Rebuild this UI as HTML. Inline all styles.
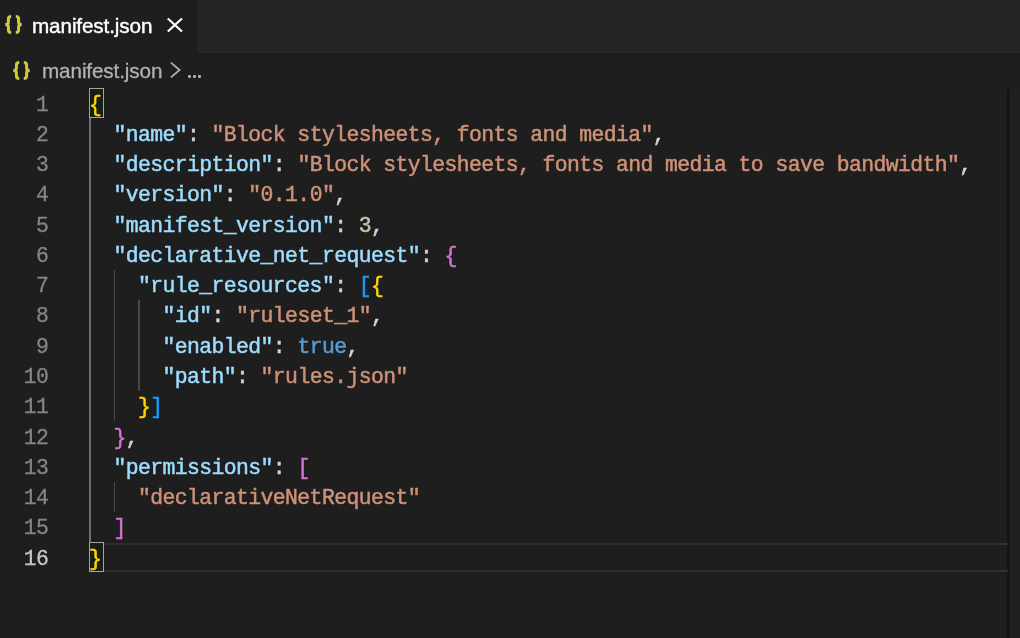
<!DOCTYPE html>
<html><head><meta charset="utf-8">
<style>
*{margin:0;padding:0;box-sizing:border-box}
html,body{width:1020px;height:638px;overflow:hidden;background:#1e1e1e}
body{position:relative;filter:blur(0.35px);font-family:"Liberation Sans",sans-serif}
.a{position:absolute}
#tabs{left:0;top:0;width:1020px;height:53px;background:#252526}
#tab{left:0;top:0;width:197px;height:53px;background:#1e1e1e}
#tabname{left:32px;top:13.5px;font-size:20.7px;letter-spacing:-0.12px;color:#ffffff;white-space:nowrap;-webkit-text-stroke:0.4px currentColor}
#crumb{left:42px;top:58.5px;font-size:20.7px;letter-spacing:-0.12px;color:#b2b2b2;white-space:nowrap;-webkit-text-stroke:0.3px currentColor}
.ln{left:0;width:48.3px;text-align:right;font-family:"Liberation Mono",monospace;font-size:21.4px;letter-spacing:-0.580px;color:#858585;white-space:pre;line-height:30.27px;-webkit-text-stroke:0.3px currentColor}
.cl{left:89.0px;font-family:"Liberation Mono",monospace;font-size:21.4px;letter-spacing:-0.580px;color:#d4d4d4;white-space:pre;line-height:30.27px;-webkit-text-stroke:0.5px currentColor}
.k{color:#9cdcfe}.s{color:#ce9178}.n{color:#b5cea8}.b{color:#569cd6}
.y{color:#ffd700}.p{color:#da70d6}.u{color:#179fff}
.g{width:1.8px;background:#484848}
.ga{width:1.9px;background:#6e6e6e}
.box{border:1.9px solid #a4a4a4;background:#171d17}
</style></head><body>
<div class="a" id="tabs"></div>
<div class="a" id="tab"></div>
<div class="a" style="left:193.5px;top:0;width:3.5px;height:53px;background:#1c1c1c"></div>
<div class="a" style="left:197px;top:53px;width:823px;height:2px;background:#1c1c1c"></div>
<svg class="a" style="left:1.5px;top:12.7px" width="24" height="23" viewBox="-2 -2 24 23"><path d="M7.2 1.5 C5.3 1.5 4.4 1.9 4.4 3.9 L4.4 7.2 C4.4 8.6 3.5 9.5 1.3 9.5 C3.5 9.5 4.4 10.4 4.4 11.8 L4.4 15.1 C4.4 17.1 5.3 17.5 7.2 17.5" stroke="#cbcb41" stroke-width="3.0" fill="none"/><g transform="translate(19.0 0) scale(-1 1)"><path d="M7.2 1.5 C5.3 1.5 4.4 1.9 4.4 3.9 L4.4 7.2 C4.4 8.6 3.5 9.5 1.3 9.5 C3.5 9.5 4.4 10.4 4.4 11.8 L4.4 15.1 C4.4 17.1 5.3 17.5 7.2 17.5" stroke="#cbcb41" stroke-width="3.0" fill="none"/></g></svg>
<div class="a" id="tabname">manifest.json</div>
<svg class="a" style="left:166px;top:16.9px" width="18" height="16" viewBox="0 0 18 16"><path d="M1.8 1.5 L16 14.5 M16 1.5 L1.8 14.5" stroke="#ffffff" stroke-width="2.2" fill="none"/></svg>
<svg class="a" style="left:10.4px;top:58.7px" width="24" height="23" viewBox="-2 -2 24 23"><path d="M7.2 1.5 C5.3 1.5 4.4 1.9 4.4 3.9 L4.4 7.2 C4.4 8.6 3.5 9.5 1.3 9.5 C3.5 9.5 4.4 10.4 4.4 11.8 L4.4 15.1 C4.4 17.1 5.3 17.5 7.2 17.5" stroke="#cbcb41" stroke-width="3.0" fill="none"/><g transform="translate(19.0 0) scale(-1 1)"><path d="M7.2 1.5 C5.3 1.5 4.4 1.9 4.4 3.9 L4.4 7.2 C4.4 8.6 3.5 9.5 1.3 9.5 C3.5 9.5 4.4 10.4 4.4 11.8 L4.4 15.1 C4.4 17.1 5.3 17.5 7.2 17.5" stroke="#cbcb41" stroke-width="3.0" fill="none"/></g></svg>
<div class="a" id="crumb">manifest.json</div>
<svg class="a" style="left:169px;top:61px" width="13" height="18" viewBox="0 0 13 18"><path d="M1.9 1.6 L10.6 9 L1.9 16.4" stroke="#b2b2b2" stroke-width="1.75" fill="none"/></svg>
<div class="a" style="left:187.6px;top:74.8px;width:3.6px;height:3.6px;border-radius:1.2px;background:#b2b2b2"></div>
<div class="a" style="left:192.7px;top:74.8px;width:3.6px;height:3.6px;border-radius:1.2px;background:#b2b2b2"></div>
<div class="a" style="left:197.8px;top:74.8px;width:3.6px;height:3.6px;border-radius:1.2px;background:#b2b2b2"></div>

<div class="a" style="left:1009px;top:88px;width:11px;height:550px;background:#202020"></div>
<div class="a" style="left:1006px;top:88.5px;width:3.6px;height:550px;background:linear-gradient(to right,#1b1b1b,#131313 45%,#161616 70%,#1e1e1e)"></div>
<div class="a" style="left:89.0px;top:542.85px;width:918.5px;height:29px;border-top:2px solid #2f2f2f;border-bottom:2px solid #2f2f2f"></div>
<div class="a ga" style="left:89.00px;top:118.27px;height:423.78px"></div>
<div class="a g" style="left:113.52px;top:269.62px;height:151.35px"></div>
<div class="a g" style="left:138.04px;top:299.89px;height:90.81px"></div>
<div class="a g" style="left:113.52px;top:481.51px;height:30.27px"></div>
<div class="a box" style="left:89.0px;top:88.00px;width:14.7px;height:30.27px"></div>
<div class="a box" style="left:89.0px;top:542.05px;width:14.7px;height:30.27px"></div>
<div class="a ln" style="top:89.60px">1</div>
<div class="a ln" style="top:119.87px">2</div>
<div class="a ln" style="top:150.14px">3</div>
<div class="a ln" style="top:180.41px">4</div>
<div class="a ln" style="top:210.68px">5</div>
<div class="a ln" style="top:240.95px">6</div>
<div class="a ln" style="top:271.22px">7</div>
<div class="a ln" style="top:301.49px">8</div>
<div class="a ln" style="top:331.76px">9</div>
<div class="a ln" style="top:362.03px">10</div>
<div class="a ln" style="top:392.30px">11</div>
<div class="a ln" style="top:422.57px">12</div>
<div class="a ln" style="top:452.84px">13</div>
<div class="a ln" style="top:483.11px">14</div>
<div class="a ln" style="top:513.38px">15</div>
<div class="a ln" style="top:543.65px;color:#c6c6c6">16</div>
<div class="a cl" style="top:89.60px"><span class="y">{</span></div>
<div class="a cl" style="top:119.87px">  <span class="k">"name"</span>: <span class="s">"Block stylesheets, fonts and media"</span>,</div>
<div class="a cl" style="top:150.14px">  <span class="k">"description"</span>: <span class="s">"Block stylesheets, fonts and media to save bandwidth"</span>,</div>
<div class="a cl" style="top:180.41px">  <span class="k">"version"</span>: <span class="s">"0.1.0"</span>,</div>
<div class="a cl" style="top:210.68px">  <span class="k">"manifest_version"</span>: <span class="n">3</span>,</div>
<div class="a cl" style="top:240.95px">  <span class="k">"declarative_net_request"</span>: <span class="p">{</span></div>
<div class="a cl" style="top:271.22px">    <span class="k">"rule_resources"</span>: <span class="u">[</span><span class="y">{</span></div>
<div class="a cl" style="top:301.49px">      <span class="k">"id"</span>: <span class="s">"ruleset_1"</span>,</div>
<div class="a cl" style="top:331.76px">      <span class="k">"enabled"</span>: <span class="b">true</span>,</div>
<div class="a cl" style="top:362.03px">      <span class="k">"path"</span>: <span class="s">"rules.json"</span></div>
<div class="a cl" style="top:392.30px">    <span class="y">}</span><span class="u">]</span></div>
<div class="a cl" style="top:422.57px">  <span class="p">}</span>,</div>
<div class="a cl" style="top:452.84px">  <span class="k">"permissions"</span>: <span class="p">[</span></div>
<div class="a cl" style="top:483.11px">    <span class="s">"declarativeNetRequest"</span></div>
<div class="a cl" style="top:513.38px">  <span class="p">]</span></div>
<div class="a cl" style="top:543.65px"><span class="y">}</span></div>
</body></html>
